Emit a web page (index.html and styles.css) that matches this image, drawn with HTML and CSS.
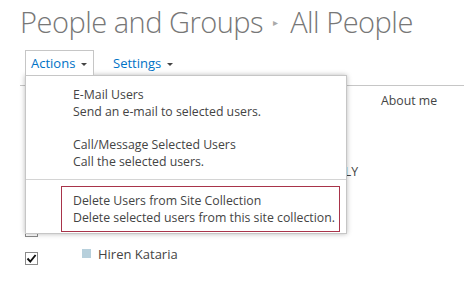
FILE: index.html
```html
<!DOCTYPE html>
<html>
<head>
<meta charset="utf-8">
<link rel="stylesheet" href="styles.css">
</head>
<body>
<div class="page">
  <h1 class="title"><span>People and Groups</span><span class="sep">&#9656;</span><span>All People</span></h1>
  <div class="toolbar">
    <div class="actions">
      <div class="tb-btn open">Actions <span class="caret"></span></div>
      <div class="menu">
        <div class="group">
          <div class="item">
            <div>E-Mail Users</div>
            <div>Send an e-mail to selected users.</div>
          </div>
          <div class="item">
            <div>Call/Message Selected Users</div>
            <div>Call the selected users.</div>
          </div>
        </div>
        <div class="group second">
          <div class="item hl">
            <div>Delete Users from Site Collection</div>
            <div>Delete selected users from this site collection.</div>
          </div>
        </div>
      </div>
    </div>
    <div class="tb-btn">Settings <span class="caret"></span></div>
  </div>
  <div class="list">
    <div class="list-head"><span class="about">About me</span></div>
    <div class="row tall"><span class="only">ONLY</span></div>
    <div class="row"></div>
    <div class="row"><span class="cb"></span></div>
    <div class="row"><span class="cb checked"><svg width="11" height="11" viewBox="0 0 11 11"><path d="M1.5 5.5 L4.3 8.6 L9.6 2" fill="none" stroke="#111" stroke-width="1.9"/></svg></span><span class="pres"></span><span class="name">Hiren Kataria</span></div>
  </div>
</div>
</body>
</html>
```
FILE: styles.css
```css
html, body {
  margin: 0;
  padding: 0;
  background: #fff;
}
.page {
  width: 464px;
  height: 281px;
  overflow: hidden;
  font-family: "Open Sans", "Noto Sans", sans-serif;
  font-size: 12.3px;
  color: #444;
}
.title {
  margin: 0;
  padding: 4px 0 0 20px;
  height: 50px;
  box-sizing: border-box;
  font-family: "Open Sans", sans-serif;
  font-weight: 300;
  font-size: 29px;
  letter-spacing: -0.5px;
  line-height: 36px;
  color: #777;
  white-space: nowrap;
  display: flex;
  align-items: baseline;
}
.title .sep {
  font-size: 10px;
  letter-spacing: 0;
  color: #aaa;
  margin: 0 12px 0 10px;
  position: relative;
  top: -7px;
}
.toolbar {
  display: flex;
  height: 25px;
  margin-left: 25px;
  gap: 13px;
}
.actions {
  position: relative;
}
.tb-btn {
  height: 25px;
  box-sizing: border-box;
  padding: 0 8px 0 5px;
  border: 1px solid transparent;
  border-bottom: none;
  color: #0072c6;
  font-size: 13px;
  line-height: 25px;
  white-space: nowrap;
}
.tb-btn.open {
  border-color: #c6c6c6;
  width: 69px;
  background: #fff;
  position: relative;
  z-index: 3;
}
.caret {
  display: inline-block;
  width: 0;
  height: 0;
  border-left: 3px solid transparent;
  border-right: 3px solid transparent;
  border-top: 3px solid #444;
  vertical-align: middle;
  margin-left: 2px;
  margin-top: -1px;
}
.menu {
  position: absolute;
  left: 0;
  top: 25px;
  width: 322px;
  box-sizing: border-box;
  background: #fff;
  border: 1px solid #c6c6c6;
  box-shadow: 0 0 5px rgba(0,0,0,0.28);
  z-index: 2;
  padding: 2px 0 1px 0;
}
.group {
  padding-bottom: 1px;
}
.group.second {
  border-top: 1px solid #d4d4d4;
  padding-top: 6px;
  padding-bottom: 0;
}
.item {
  padding: 8px 0 8px 47px;
  line-height: 17px;
  white-space: nowrap;
}
.item.hl {
  margin: 0 6px 0 35px;
  padding: 5px 0 5px 11px;
  border: 1px solid #a8344a;
}
.list {
  margin: 10px 0 0 20px;
  border-top: 1px solid #c6c6c6;
}
.list-head {
  height: 29px;
  line-height: 29px;
  padding-left: 361px;
  white-space: nowrap;
}
.row {
  height: 28px;
  display: flex;
  align-items: center;
  position: relative;
}
.row.tall {
  height: 73px;
  align-items: flex-start;
}
.only {
  padding: 48px 0 0 306px;
  line-height: 17px;
}
.cb {
  width: 13px;
  height: 13px;
  box-sizing: border-box;
  border: 1px solid #8a8a8a;
  margin-left: 5px;
  display: flex;
  align-items: center;
  justify-content: center;
  background: #fff;
}
.pres {
  width: 9px;
  height: 9px;
  background: #b7d0dc;
  margin-left: 44px;
  position: relative;
  top: -5px;
}
.name {
  margin-left: 7px;
  font-size: 13px;
  position: relative;
  top: -4px;
}
```
